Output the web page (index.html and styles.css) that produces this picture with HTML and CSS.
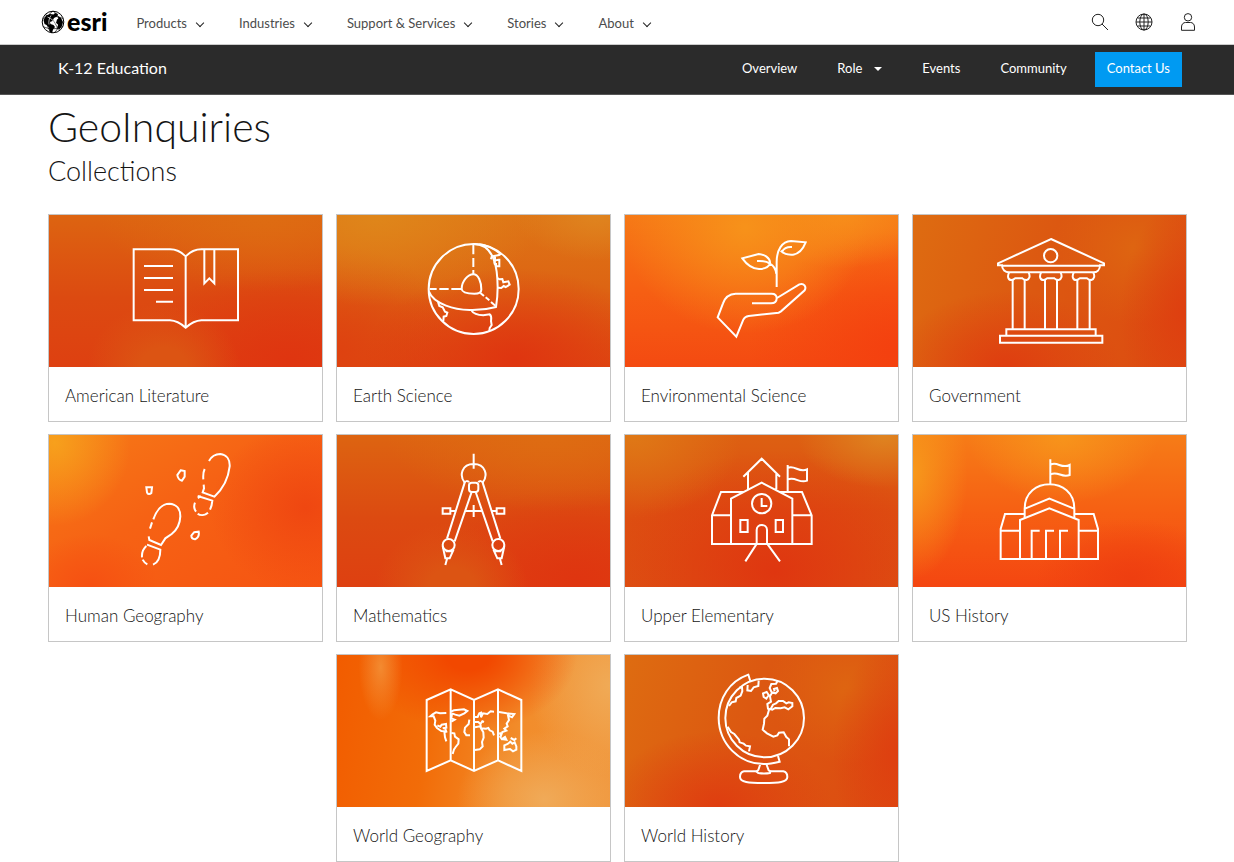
FILE: index.html
```html
<!DOCTYPE html>
<html lang="en">
<head>
  <meta charset="UTF-8">
  <meta name="viewport" content="width=device-width, initial-scale=1">
  <title>GeoInquiries Collections | K-12 Education</title>
  <link rel="stylesheet" href="styles.css">
</head>
<body>

  <header class="global-header">
    <a class="logo" href="#" aria-label="esri home">
      <svg class="logo-globe" viewBox="0 0 24 24" aria-hidden="true">
        <circle cx="12" cy="12" r="10.8" fill="#fff" stroke="#000" stroke-width="1"/>
        <path fill="#000" d="M5 5.500 9 4l3.500.5L14 3l3 1-1 2.500-3 1.500-1.500 3-2.500 1 .5 2 3 1 1.500 2-2 2.500-1 4-2.500-2-.5-4-2.500-2.500-2-1L2.500 10zM17 6l3 2 2 4-1 4-3 4-1.500-3 .5-2.500-2-1.500 1-3.500 1.500-1z"/>
        <path fill="none" stroke="#000" stroke-width=".7" d="M12 1.200C5 4 4 18 11 22.800M12 1.200C20 5 20 18 13 22.800M2 8.500c6-3 13-3 20 0M2 16.500c6 3 13 3 20 0M4 4.500c5 2 10 6 13 15"/>
        <path fill="none" stroke="#fff" stroke-width=".7" d="M6.500 7c4 1.500 8 5 10 9M10 5.500c-2 3-2.500 6-2 9"/>
      </svg>
      <span class="logo-text">esri</span>
    </a>
    <nav class="global-nav" aria-label="Main">
      <button type="button">Products</button>
      <button type="button">Industries</button>
      <button type="button">Support &amp; Services</button>
      <button type="button">Stories</button>
      <button type="button">About</button>
    </nav>
    <div class="tools">
      <button type="button" aria-label="Search">
        <svg viewBox="0 0 18 18"><circle cx="7" cy="7" r="5.700"/><path d="M11 11l6 6"/></svg>
      </button>
      <button type="button" aria-label="Language">
        <svg viewBox="0 0 18 18"><circle cx="9" cy="9" r="8"/><ellipse cx="9" cy="9" rx="4.200" ry="8"/><path d="M9 1v16M1 9h16M2.500 5h13M2.500 13h13"/></svg>
      </button>
      <button type="button" aria-label="Sign in">
        <svg viewBox="0 0 18 18"><circle cx="9" cy="4.300" r="3.700"/><path d="M2.500 17.300v-3.300c0-3 2-4.500 4-4.500h5c2 0 4 1.500 4 4.500v3.300z"/></svg>
      </button>
    </div>
  </header>

  <div class="sub-header">
    <a class="section-name" href="#">K-12 Education</a>
    <nav class="sub-nav" aria-label="K-12 Education">
      <a href="#">Overview</a>
      <button class="role" type="button">Role</button>
      <a href="#">Events</a>
      <a href="#">Community</a>
      <a class="contact" href="#">Contact Us</a>
    </nav>
  </div>

  <main>
    <h1>GeoInquiries</h1>
    <h2>Collections</h2>

    <div class="cards">
      <a class="card" href="#">
        <svg class="art art-ember" viewBox="3 15 819 456" aria-hidden="true">
          <path d="M413 139C398 124 384 118 366 118H257V331H366C384 332 398 340 413 353C428 340 442 332 460 331H570V118H460C442 118 428 124 413 139V350"/>
          <path d="M288 168h87M288 204h87M288 240h87M324 275h51M469 118V220L484 205 499 220V118"/>
        </svg>
        <span class="card-title">American Literature</span>
      </a>

      <a class="card" href="#">
        <svg class="art art-amber" viewBox="3 15 819 456" aria-hidden="true">
          <circle cx="413" cy="237" r="135"/>
          <path d="M413 102C455 102 475 135 482 185C487 225 486 255 480 291C430 305 370 303 330 287C300 275 285 262 279 245"/>
          <path d="M412 193C396 193 377 213 377 237C378 248 397 251 415 251C426 251 436 248 436 239C436 215 427 193 412 193z"/>
          <path d="M412 104V133M412 144V171M412 180V193M281 237H302M310 237H338M346 237H377M433 249l11 9M449 262l11 9M465 276l13 11"/>
          <path d="M430 103C455 106 478 119 494 132C487 140 480 133 467 140L465 148M472 152L477 148V140M477 164C472 155 478 148 490 149V169H480V159M484 204L490 208 499 207 502 217 517 214 521 224 509 231 503 228 496 234 486 233"/>
          <path d="M306 276L310 288 320 292 327 305 334 308 331 318 323 320 322 333M407 302C413 312 426 315 442 316L461 313C468 318 466 325 465 333L467 345 461 354 460 363"/>
        </svg>
        <span class="card-title">Earth Science</span>
      </a>

      <a class="card" href="#">
        <svg class="art art-sunrise" viewBox="3 15 819 456" aria-hidden="true">
          <path d="M458 231V156C458 120 474 94 501 93L545 97C538 115 526 131 507 134C488 136 478 129 470 122M474 125C479 116 489 110 504 111M457 192C455 175 449 167 438 161C440 142 419 133 404 132L355 145C367 162 382 176 405 177C423 177 434 170 438 161C430 155 416 152 399 153"/>
          <path d="M384 280H441C453 280 458 273 458 265C458 257 453 251 443 251H335C314 252 302 265 297 280L281 322 337 380 358 329C361 322 367 319 374 318L464 308 471 304 542 241C548 230 540 218 526 223L459 264"/>
        </svg>
        <span class="card-title">Environmental Science</span>
      </a>

      <a class="card" href="#">
        <svg class="art art-rust" viewBox="3 15 819 456" aria-hidden="true">
          <path d="M417 87L576 160V166H564C564 179 555 187 544 187H291C280 187 270 179 270 166H258V160zM270 167H564"/>
          <circle cx="416" cy="137" r="20"/>
          <path d="M291 188C285 200 289 210 298 210C305 210 306 206 309 205H331C335 209 338 210 344 210C353 208 355 198 350 188M387 188C381 200 385 210 394 210C401 210 402 206 405 205H427C431 209 434 210 440 210C449 208 451 198 446 188M485 188C479 200 483 210 492 210C499 210 500 206 503 205H525C529 209 532 210 538 210C547 208 549 198 544 188"/>
          <path d="M302 209V358M338 209V358M399 209V358M435 209V358M496 209V358M533 209V358M283 377V358H551V377M264 377H571V398H264z"/>
        </svg>
        <span class="card-title">Government</span>
      </a>

      <a class="card" href="#">
        <svg class="art art-dawn" viewBox="3 9 819 456" aria-hidden="true">
          <path d="M316 262C325 236 342 215 364 215C386 216 397 232 397 253C396 275 386 294 371 306L352 319 339 339 304 324 302 313M312 271L306 290M295 342C286 350 281 364 282 376M284 383C287 389 292 394 298 397M297 338L337 353C337 375 332 391 315 398"/>
          <path d="M483 87C491 72 502 66 517 66C537 68 546 84 545 103C541 139 523 172 499 194L464 181 468 169 467 158M470 111C465 121 465 130 466 142M449 192L493 206C492 219 489 227 486 233M458 191L450 199M441 212C437 221 439 232 444 239M449 245C458 252 471 250 480 242"/>
          <path d="M398 115L410 117V134L402 146C393 144 389 137 388 129zM295 166H312L310 183C305 188 299 187 297 181zM438 301L452 299C454 309 449 318 441 322C434 321 430 316 430 311z"/>
        </svg>
        <span class="card-title">Human Geography</span>
      </a>

      <a class="card" href="#">
        <svg class="art art-ember" viewBox="3 9 819 456" aria-hidden="true">
          <path d="M413 65V110M413 219V255M387 153C368 130 378 96 413 96C448 96 458 130 439 153"/>
          <rect x="399" y="152" width="28" height="28" rx="8"/>
          <path d="M399 151C396 146 387 146 386 152L333 320M407 180L356 328M427 151C430 146 439 146 440 152L493 320M419 180L470 328M386 237H440M344 237H359M467 237H482M320 229H343V245H320zM482 229H505V245H482z"/>
          <circle cx="338" cy="339" r="18"/>
          <circle cx="487" cy="339" r="18"/>
          <path d="M320 342L328 379 341 379 353 352M333 381L328 399M329 358H348M505 342L497 379 484 379 472 352M492 381L497 399M477 358H496"/>
        </svg>
        <span class="card-title">Mathematics</span>
      </a>

      <a class="card" href="#">
        <svg class="art art-brick" viewBox="3 9 819 456" aria-hidden="true">
          <path d="M358 134L413 80 468 134M372 122V172M457 122V172M321 336V200L413 152 505 200V336M358 180H291L264 250V336H563V250L534 180H466M264 250H321M505 250H563M491 180V99M491 108C512 98 526 124 549 112V146C528 156 512 132 491 143"/>
          <circle cx="413" cy="215" r="29"/>
          <path d="M413 198V222H430M349 264H371V300H349zM455 264H477V300H455zM398 336V294C398 274 429 274 429 294V336M397 337L364 388M431 337L468 388"/>
        </svg>
        <span class="card-title">Upper Elementary</span>
      </a>

      <a class="card" href="#">
        <svg class="art art-flare" viewBox="3 9 819 456" aria-hidden="true">
          <path d="M415 160V82M416 98C436 87 449 112 473 99V129C449 139 438 116 416 127M338 258V230C338 132 487 132 487 230V258M339 230L412 200 486 230"/>
          <path d="M324 381V264L412 229 500 264V381M338 246H279L266 291V381H558V291L545 246H487M266 296H324M500 296H558M383 296H359V379M426 296H402V379M468 296H444V379"/>
        </svg>
        <span class="card-title">US History</span>
      </a>

      <a class="card" href="#">
        <svg class="art art-sand" viewBox="3 15 819 456" aria-hidden="true">
          <path d="M272 150L344 118 414 150 486 118 556 150V363L486 331 414 363 344 331 272 363zM344 118V331M414 150V363M486 118V331"/>
          <path d="M331 189L312 190 300 187 290 193 283 199 293 199 298 212 296 224 303 234 316 243 325 244 327 262 331 274M304 226L313 230 317 224 330 222 331 233 320 235M327 234L332 248M344 185L354 181 384 178 394 183 385 190 370 197 358 194 348 190M348 190L346 205 356 209 346 215M346 249L355 250 357 260 368 268 367 281 359 291 354 298 350 312"/>
          <path d="M400 209L398 222 387 233 385 246 391 256 402 256M416 201H425L430 190 435 188V202L441 190 454 192 464 184 474 185M417 216L427 216 433 222 439 214 444 216M417 232L432 229 435 235 450 236 457 234 461 241 470 245 474 256M433 221L435 235 442 247 443 263 438 276 440 289 431 298 417 300"/>
          <path d="M489 186L512 190 535 192 528 202 516 196 519 210 512 221 515 229 505 236 511 242 499 246 495 257 491 247M491 258L497 267 507 261 511 269 496 267M505 286L515 282 523 275 529 281 536 277 541 289 541 299 531 304 522 297 505 300zM524 264L535 270 541 265"/>
        </svg>
        <span class="card-title">World Geography</span>
      </a>

      <a class="card" href="#">
        <svg class="art art-rust" viewBox="3 15 819 456" aria-hidden="true">
          <circle cx="422" cy="204" r="118"/>
          <path d="M379 93L373 74C316 94 284 145 284 204C285 283 347 342 419 342C436 342 451 339 467 335L462 318M409 342L403 360 398 365 403 369C415 371 427 371 438 369L439 364 434 361 427 342"/>
          <path d="M400 364H360C350 366 348 371 348 381C348 397 374 399 419 399C464 399 490 397 490 381C490 371 488 366 478 364H439"/>
          <path d="M315 168L323 157 335 154 337 144 350 137 355 123 354 112 345 113M371 105L370 121 381 123 389 112 403 108 404 92M311 230L321 246 331 252 345 269 347 277 359 281 366 287 378 289 375 304"/>
          <path d="M461 92L456 101 442 102 437 114 443 127 455 130 462 123 459 114 450 117 452 124M444 128L438 139 441 155 430 162 432 176 445 179 454 174 470 175 482 172 493 178 505 169 505 159 494 157 487 160 477 153 464 153 456 160 447 164 440 177M435 179L430 197 421 206 420 221 416 239 429 250 448 260 460 256 465 248 479 247 487 261 495 268 495 289M417 130L428 126 434 135 427 146 419 141z"/>
        </svg>
        <span class="card-title">World History</span>
      </a>
    </div>
  </main>

</body>
</html>
```
FILE: styles.css
```css
* {
  box-sizing: border-box;
}

body {
  margin: 0;
  background-color: #fff;
  color: #151515;
  font-family: Lato, "Open Sans", sans-serif;
  font-weight: 300;
}

a {
  color: inherit;
  text-decoration: none;
}

button {
  padding: 0;
  border: 0;
  background: none;
  color: inherit;
  font: inherit;
  cursor: pointer;
}

/* Top bar */
.global-header {
  display: flex;
  align-items: center;
  height: 45px;
  padding: 0 37px 0 41px;
  border-bottom: 1px solid #ccc;
}

.logo {
  display: flex;
  align-items: center;
  gap: 2px;
  color: #000;
}

.logo-globe {
  width: 24px;
  height: 24px;
}

.logo-text {
  font-size: 25px;
  font-weight: 900;
  line-height: 24px;
  padding-bottom: 2px;
}

.global-nav {
  display: flex;
  gap: 36px;
  margin-left: 29px;
  padding-top: 2px;
  font-size: 13px;
  font-weight: 400;
  color: #4c4c4c;
}

.global-nav button {
  display: flex;
  align-items: center;
  gap: 10px;
  white-space: nowrap;
}

.global-nav button::after {
  content: "";
  width: 5px;
  height: 5px;
  border-right: 1px solid #222;
  border-bottom: 1px solid #222;
  transform: rotate(45deg);
}

.tools {
  display: flex;
  gap: 26px;
  margin-left: auto;
}

.tools svg {
  display: block;
  width: 18px;
  height: 18px;
  fill: none;
  stroke: #222;
  stroke-width: 1;
}

/* Section bar */
.sub-header {
  display: flex;
  align-items: center;
  justify-content: space-between;
  height: 50px;
  padding: 0 52px 0 58px;
  border-bottom: 1px solid #555;
  background-color: #2b2b2b;
  color: #fff;
}

.section-name {
  padding-bottom: 4px;
  font-size: 16px;
  font-weight: 400;
}

.sub-nav {
  display: flex;
  align-items: center;
  gap: 40px;
  font-size: 13px;
  font-weight: 400;
  line-height: 33px;
}

.sub-nav > * {
  padding-bottom: 2px;
}

.role {
  display: flex;
  align-items: center;
  gap: 12px;
}

.role::after {
  content: "";
  border: 4px solid transparent;
  border-top-color: #fff;
  border-bottom: 0;
}

.sub-nav .contact {
  margin-left: -12px;
  padding: 0 12px 2px;
  background-color: #009af2;
}

/* Collections */
main {
  padding: 10px 47px 0 48px;
}

h1,
h2 {
  margin: 0;
  font-weight: 300;
}

h1 {
  font-size: 41px;
  line-height: 44px;
}

h2 {
  margin-top: 4px;
  font-size: 27px;
  line-height: 36px;
}

.cards {
  display: flex;
  flex-wrap: wrap;
  justify-content: center;
  gap: 12px 13px;
  margin-top: 25px;
}

.card {
  width: calc((100% - 39px) / 4);
  border: 1px solid #c6c6c6;
}

.art {
  display: block;
  width: 100%;
  fill: none;
  stroke: #fff;
  stroke-width: 6;
}

.card-title {
  display: block;
  padding: 17px 16px 13px;
  color: #151515;
  font-size: 17px;
  line-height: 24px;
}

/* Card artwork backgrounds */
.art-ember {
  background:
    radial-gradient(ellipse 60% 50% at 78% 0%, #de6c12, transparent),
    radial-gradient(ellipse 28% 42% at 42% 100%, #dc5413 30%, transparent),
    radial-gradient(ellipse 60% 60% at 88% 95%, #df3510, transparent),
    linear-gradient(#dd6411, #dc4a11 55%, #de4011);
}

.art-amber {
  background:
    radial-gradient(ellipse 60% 60% at 15% 0%, #df861a, transparent),
    radial-gradient(ellipse 30% 30% at 95% 0%, #df841f, transparent),
    radial-gradient(ellipse 55% 60% at 65% 95%, #df3510, transparent),
    radial-gradient(ellipse 45% 70% at 0% 90%, #de4210, transparent),
    linear-gradient(#de7416, #dd6413 50%, #de4a11);
}

.art-sunrise {
  background:
    radial-gradient(ellipse 45% 70% at 44% 8%, #f7921a, transparent),
    radial-gradient(ellipse 35% 35% at 80% 0%, #f78c1a, transparent),
    radial-gradient(ellipse 55% 80% at 100% 90%, #f4400f, transparent),
    linear-gradient(#f67816, #f65f13 50%, #f44a11);
}

.art-rust {
  background:
    radial-gradient(ellipse 24% 75% at 100% 65%, #de3f10, transparent),
    radial-gradient(ellipse 30% 50% at 82% 22%, #de6511, transparent),
    radial-gradient(ellipse 42% 50% at 34% 100%, #df3d10, transparent),
    linear-gradient(110deg, #de6c11, #dc5811 45%, #dd4b11);
}

.art-dawn {
  background:
    radial-gradient(ellipse 28% 55% at 2% 5%, #f7a01c, transparent),
    radial-gradient(ellipse 35% 55% at 94% 48%, #ef4711, transparent),
    radial-gradient(ellipse 25% 35% at 15% 100%, #f65012, transparent),
    linear-gradient(150deg, #f67a17, #f66214 45%, #f65412);
}

.art-brick {
  background:
    radial-gradient(ellipse 32% 35% at 95% 0%, #df8420, transparent),
    radial-gradient(ellipse 40% 55% at 3% 0%, #df7816, transparent),
    radial-gradient(ellipse 60% 80% at 55% 90%, #df3610, transparent),
    linear-gradient(#dd6012, #dd4e11 50%, #dd5012);
}

.art-flare {
  background:
    radial-gradient(ellipse 20% 70% at 0% 25%, #f7981b, transparent),
    radial-gradient(ellipse 35% 45% at 55% 0%, #f7941b, transparent),
    radial-gradient(ellipse 35% 40% at 80% 95%, #ee3e10, transparent),
    linear-gradient(#f67c17, #f66013 50%, #f44611);
}

.art-sand {
  background:
    radial-gradient(ellipse 8% 35% at 16% 8%, #f38a30, transparent),
    radial-gradient(ellipse 40% 50% at 48% 0%, #f24800 20%, transparent),
    radial-gradient(ellipse 30% 60% at 100% 20%, #f0aa56, transparent),
    radial-gradient(ellipse 32% 45% at 76% 95%, #f0aa58, transparent),
    linear-gradient(100deg, #f25c00, #f26c08 35%, #f28c2a 65%, #f0963c);
}
```
